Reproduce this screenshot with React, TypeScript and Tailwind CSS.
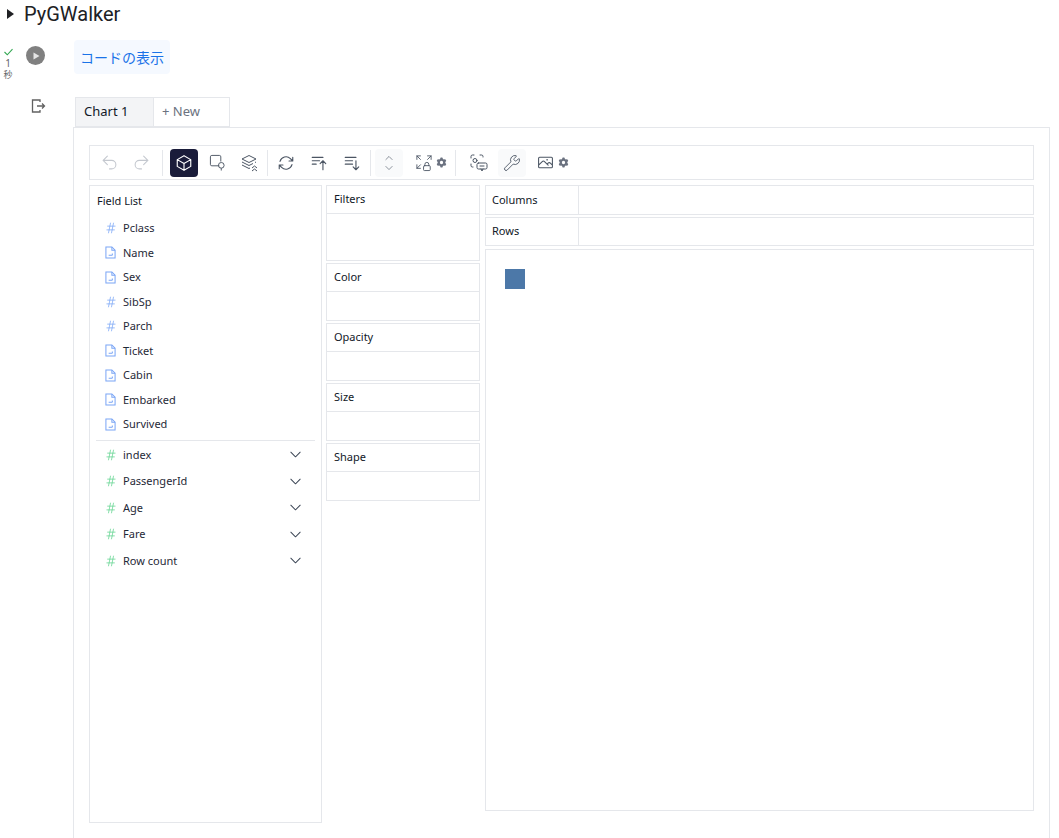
import {
  HiOutlineArrowUturnLeft,
  HiOutlineArrowUturnRight,
  HiOutlineCube,
  HiOutlineArrowPath,
  HiOutlineBarsArrowUp,
  HiOutlineBarsArrowDown,
  HiOutlinePhoto,
  HiMiniCog6Tooth,
  HiOutlineHashtag,
  HiOutlineChevronUp,
  HiOutlineChevronDown,
  HiChevronDown,
} from "react-icons/hi2";
import { Wrench } from "lucide-react";

const dims: [string, "hash" | "doc"][] = [
  ["Pclass", "hash"],
  ["Name", "doc"],
  ["Sex", "doc"],
  ["SibSp", "hash"],
  ["Parch", "hash"],
  ["Ticket", "doc"],
  ["Cabin", "doc"],
  ["Embarked", "doc"],
  ["Survived", "doc"],
];
const measures = ["index", "PassengerId", "Age", "Fare", "Row count"];

function DocIcon() {
  return (
    <svg viewBox="0 0 12 14" className="h-[13px] w-[11px]" fill="none" stroke="#7aa5f5" strokeWidth="1.1">
      <path d="M1 1h6.5L11 4.5V13H1z" />
      <path d="M7.5 1v3.5H11" />
      <path d="M4 10h4M8 8v2" />
    </svg>
  );
}

function Divider() {
  return <div className="mx-[4px] h-[26px] w-px bg-[#e5e7eb]" />;
}

function SizeLockIcon() {
  return (
    <svg viewBox="0 0 18 18" className="h-[18px] w-[16px]" fill="none" stroke="#4b5563" strokeWidth="1" strokeLinecap="round">
      <path d="M1 5V1h4M1 1l4 4M17 5V1h-4M17 1l-4 4M1 11v4h4M1 15l4-4" />
      <rect x="8.5" y="12" width="7.5" height="5.5" rx="1" />
      <path d="M10 12v-1.5a2.2 2.2 0 0 1 4.4 0V12" />
    </svg>
  );
}

function ShapeIcon() {
  return (
    <svg viewBox="0 0 18 18" className="h-[17px] w-[17px]" fill="none" stroke="#4b5563" strokeWidth="1">
      <path d="M11 12.5H3a1.5 1.5 0 0 1-1.5-1.5V3A1.5 1.5 0 0 1 3 1.500h8A1.500 1.500 0 0 1 12.500 3v5" />
      <circle cx="13" cy="12" r="3" />
      <path d="M13 15v2.500" />
    </svg>
  );
}

function LayersIcon() {
  return (
    <svg viewBox="0 0 18 18" className="h-[18px] w-[18px]" fill="none" stroke="#4b5563" strokeWidth="1" strokeLinejoin="round">
      <path d="M9 1.500 16 5 9 8.500 2 5z" />
      <path d="M2 8l7 3.500L13 9.500M16 8l-1 .5" />
      <path d="M2 11l7 3.500 1-.5" />
      <path d="M12 14l2.500-2 2.500 2M12 17l2.500-2 2.500 2" />
    </svg>
  );
}

function CaptureIcon() {
  return (
    <svg viewBox="0 0 18 18" className="h-[18px] w-[18px]" fill="none" stroke="#4b5563" strokeWidth="1" strokeLinecap="round">
      <path d="M1 4V2.500A1.500 1.500 0 0 1 2.500 1H4M10 1h1.500A1.500 1.500 0 0 1 13 2.500V3M1 10v1.500A1.500 1.500 0 0 0 2.500 13H3" />
      <circle cx="5" cy="6.500" r="2" />
      <rect x="7" y="9" width="10" height="6" rx="1.500" />
      <path d="M10 12h4M11 15l1 2 1-2" />
    </svg>
  );
}

function Shelf({ title, bodyClass }: { title: string; bodyClass: string }) {
  return (
    <div className="border border-[#e5e7eb]">
      <div className="flex h-[28px] items-center border-b border-[#e5e7eb] px-[7px] text-[11px] text-[#111827]">
        {title}
      </div>
      <div className={bodyClass} />
    </div>
  );
}

function AxisRow({ title, cls }: { title: string; cls: string }) {
  return (
    <div className={`flex border border-[#e5e7eb] ${cls}`}>
      <div className="flex w-[93px] items-center border-r border-[#e5e7eb] px-[6px] text-[11px] text-[#111827]">
        {title}
      </div>
    </div>
  );
}

export default function App() {
  return (
    <div className="h-[838px] w-[1059px] overflow-hidden bg-white font-['Noto_Sans',sans-serif]">
      <div className="flex h-[28px] items-center pl-[7px] font-['Roboto',sans-serif] text-[20px] text-[#202124]">
        <span className="mr-[10px] h-0 w-0 border-y-[5px] border-l-[7px] border-y-transparent border-l-[#202124]" />
        PyGWalker
      </div>
      <div className="flex pt-[12px]">
        <div className="flex w-[74px] shrink-0">
          <div className="flex w-[16px] flex-col items-center text-[10px] leading-[12px] text-[#5f6368]">
            <svg viewBox="0 0 12 10" className="mt-[8px] h-[8px] w-[11px]" fill="none" stroke="#34a853" strokeWidth="1.400">
              <path d="M1 5l3.500 3.500L11 1.500" />
            </svg>
            <span className="mt-[1px]">1</span>
            <span className="font-['Noto_Sans_CJK_JP',sans-serif] text-[9px]">秒</span>
          </div>
          <div className="ml-[10px] mt-[6px] flex h-[19px] w-[19px] items-center justify-center rounded-full bg-[#808080]">
            <svg viewBox="0 0 8 8" className="h-[8px] w-[8px]">
              <path d="M1.500 0.500 7.500 4 1.500 7.500z" fill="#e5e5e5" />
            </svg>
          </div>
        </div>
        <div className="flex h-[34px] w-[96px] items-center justify-center rounded-[4px] bg-[#f5f9ff] font-['Noto_Sans_CJK_JP',sans-serif] text-[14px] text-[#1a73e8]">
          コードの表示
        </div>
      </div>
      <div className="flex pt-[16px]">
        <div className="w-[73px] shrink-0 pl-[30px] pt-[1px]">
          <svg viewBox="0 0 16 16" className="h-[16px] w-[16px]" fill="none" stroke="#616161" strokeWidth="1.300">
            <path d="M10 4V2H2.500v12H10v-2" />
            <path d="M7 8h7M12 5.500 14.500 8 12 10.500" />
          </svg>
        </div>
        <div className="w-[977px]">
          <div className="ml-[2px] flex h-[30px] text-[13px]">
            <div className="flex w-[79px] items-center border border-[#e5e7eb] bg-[#f3f4f6] pl-[8px] text-[#111827]">Chart 1</div>
            <div className="flex w-[76px] items-center border-y border-r border-[#e5e7eb] pl-[8px] text-[#6b7280]">+ New</div>
          </div>
          <div className="h-[713px] border border-[#e5e7eb] px-[15px] pt-[17px]">
            <div className="flex h-[35px] items-center border border-[#e5e7eb] pl-[4px] text-[#4b5563]">
              <div className="flex w-[30px] justify-center"><HiOutlineArrowUturnLeft className="h-[17px] w-[17px] text-[#c4c8cf]" /></div>
              <div className="ml-[2px] flex w-[30px] justify-center"><HiOutlineArrowUturnRight className="h-[17px] w-[17px] text-[#c4c8cf]" /></div>
              <div className="ml-[2px] mr-[3px]"><Divider /></div>
              <div className="flex h-[28px] w-[28px] items-center justify-center rounded-[4px] bg-[#1a1c3a]"><HiOutlineCube className="h-[18px] w-[18px] text-white" /></div>
              <div className="ml-[5px] flex w-[28px] justify-center"><ShapeIcon /></div>
              <div className="ml-[4px] flex w-[28px] justify-center"><LayersIcon /></div>
              <Divider />
              <div className="flex w-[28px] justify-center"><HiOutlineArrowPath className="h-[18px] w-[18px]" /></div>
              <div className="ml-[5px] flex w-[28px] justify-center"><HiOutlineBarsArrowUp className="h-[18px] w-[18px]" /></div>
              <div className="ml-[5px] flex w-[28px] justify-center"><HiOutlineBarsArrowDown className="h-[18px] w-[18px]" /></div>
              <Divider />
              <div className="flex h-[28px] w-[28px] flex-col items-center justify-center rounded-[4px] bg-[#f9fafb]">
                <HiOutlineChevronUp className="h-[10px] w-[10px]" />
                <HiOutlineChevronDown className="h-[10px] w-[10px]" />
              </div>
              <div className="ml-[13px] flex items-center gap-[4px]"><SizeLockIcon /><HiMiniCog6Tooth className="h-[11px] w-[11px] text-[#6b7280]" /></div>
              <div className="ml-[4px]"><Divider /></div>
              <div className="ml-[5px] flex w-[28px] justify-center"><CaptureIcon /></div>
              <div className="ml-[5px] flex h-[28px] w-[28px] items-center justify-center rounded-[4px] bg-[#f9fafb]"><Wrench className="h-[18px] w-[18px]" strokeWidth={1.200} /></div>
              <div className="ml-[11px] flex items-center gap-[4px]"><HiOutlinePhoto className="h-[17px] w-[17px]" /><HiMiniCog6Tooth className="h-[11px] w-[11px] text-[#6b7280]" /></div>
            </div>
            <div className="mt-[5px] flex h-[638px] gap-[4px]">
              <div className="w-[233px] border border-[#e5e7eb] text-[11px] text-[#1f2937]">
                <div className="px-[7px] pb-[6px] pt-[6px] leading-[18px] text-[#111827]">Field List</div>
                <div className="mx-[6px] border-b border-[#e5e7eb] pb-[3px]">
                  {dims.map(([name, kind]) => (
                    <div key={name} className="flex h-[24.5px] items-center">
                      <span className="flex w-[27px] justify-center pl-[2px]">
                        {kind === "hash" ? <HiOutlineHashtag className="h-[12px] w-[12px] text-[#7aa5f5]" /> : <DocIcon />}
                      </span>
                      {name}
                    </div>
                  ))}
                </div>
                <div className="mx-[6px] pt-[1px]">
                  {measures.map((name) => (
                    <div key={name} className="flex h-[26.500px] items-center">
                      <span className="flex w-[27px] justify-center pl-[2px]">
                        <HiOutlineHashtag className="h-[12px] w-[12px] text-[#5fd38d]" />
                      </span>
                      {name}
                      <HiChevronDown className="ml-auto mr-[12px] h-[15px] w-[15px] text-[#374151]" />
                    </div>
                  ))}
                </div>
              </div>
              <div className="flex h-[315px] w-[154px] flex-col gap-[2px]">
                <Shelf title="Filters" bodyClass="h-[46px]" />
                <Shelf title="Color" bodyClass="h-[28px]" />
                <Shelf title="Opacity" bodyClass="h-[28px]" />
                <Shelf title="Size" bodyClass="h-[28px]" />
                <Shelf title="Shape" bodyClass="h-[28px]" />
              </div>
              <div className="ml-[1px] flex w-[549px] flex-col">
                <AxisRow title="Columns" cls="h-[30px]" />
                <AxisRow title="Rows" cls="mt-[2px] h-[29px]" />
                <div className="mt-[3px] h-[562px] border border-[#e5e7eb] pl-[19px] pt-[19px]">
                  <div className="h-[20px] w-[20px] bg-[#4c78a8]" />
                </div>
              </div>
            </div>
          </div>
        </div>
      </div>
    </div>
  );
}
